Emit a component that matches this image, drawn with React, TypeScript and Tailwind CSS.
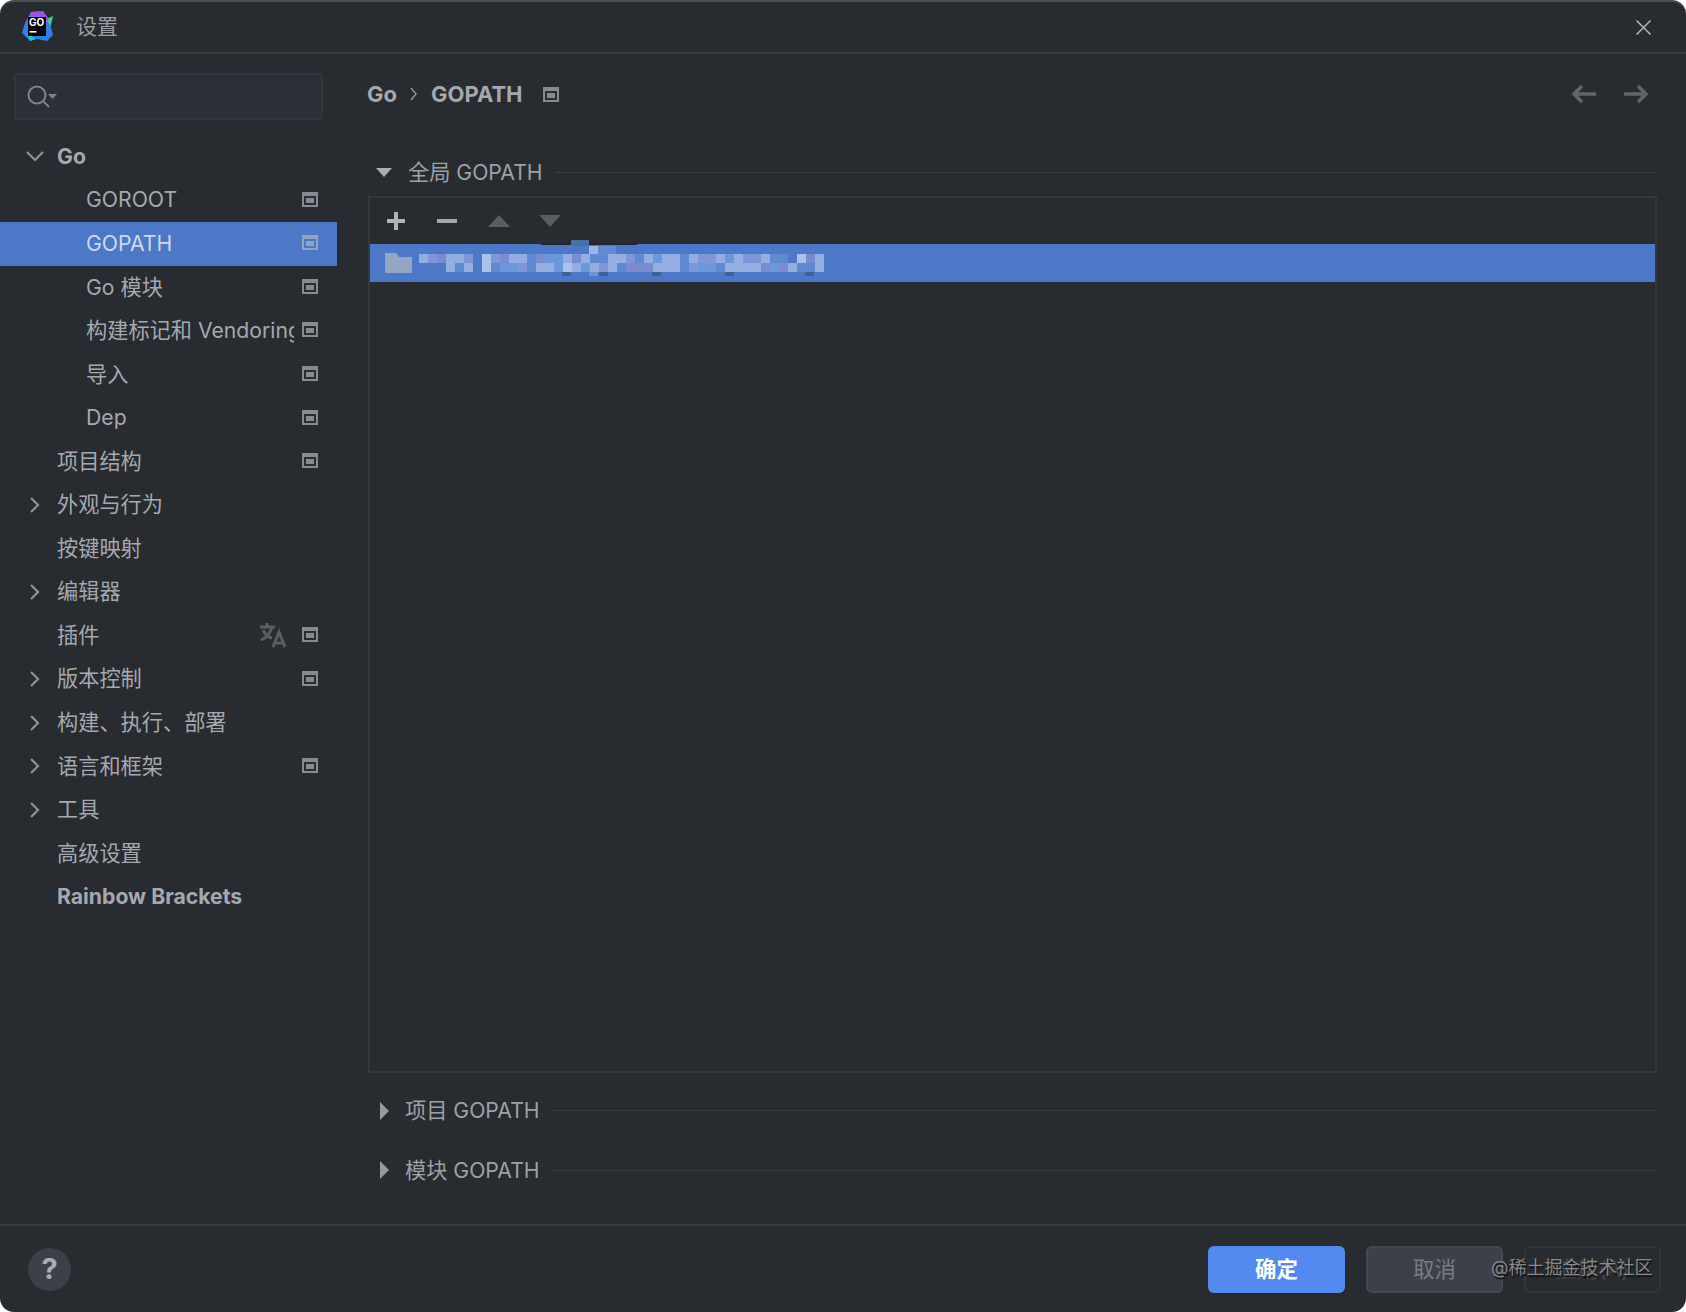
const font = "font-['Inter','Noto_Sans_CJK_SC',sans-serif]";

function PageIcon({ dim }: { dim?: boolean }) {
  return (
    <svg width="16" height="15" viewBox="0 0 16 15" className="shrink-0">
      <rect x="0" y="0" width="16" height="15" fill={dim ? "#8fa3c4" : "#868b91"} />
      <rect x="2" y="4" width="12" height="9" fill={dim ? "#4c78c7" : "#2a2d32"} />
      <rect x="4" y="6" width="8" height="5" fill={dim ? "#8fa3c4" : "#868b91"} />
    </svg>
  );
}

function Chevron({ open }: { open?: boolean }) {
  return (
    <svg width="18" height="18" viewBox="0 0 18 18" fill="none" stroke="#8e9196" strokeWidth="2.2" className="shrink-0">
      {open ? <path d="M1 4 L9 12 L17 4" /> : <path d="M5 2 L12 9 L5 16" />}
    </svg>
  );
}

function Row({
  label,
  arrow,
  open,
  indent,
  page,
  selected,
  bold,
  translate,
  clip,
}: {
  label: string;
  arrow?: boolean;
  open?: boolean;
  indent?: boolean;
  page?: boolean;
  selected?: boolean;
  bold?: boolean;
  translate?: boolean;
  clip?: boolean;
}) {
  return (
    <div className={`flex h-[43.55px] items-center pr-[19px] text-[21.2px] ${selected ? "bg-[#4c78c7] text-[#ced8e8]" : "text-[#a4a9b0]"} ${bold ? "font-bold" : ""}`}>
      <div className="flex w-[57px] shrink-0 justify-start pl-[26px]">{arrow && <Chevron open={open} />}</div>
      <div className={`min-w-0 whitespace-nowrap ${indent ? "ml-[29px]" : ""} ${clip ? "w-[208px] overflow-hidden" : ""}`}>{label}</div>
      <div className="flex-1" />
      {translate && (
        <svg width="27" height="26" viewBox="0 0 27 26" fill="none" stroke="#5a5e64" strokeWidth="3" className="mb-[2px] mr-[15px]">
          <path d="M0 5 H15 M7 1 V5 M12 5 C10 12 6 16 1 18 M3 8 C5 12 8 15 12 16" />
          <path d="M13 25 L19 10 L25 25 M15 21 H23" />
        </svg>
      )}
      {page && (
        <div className="mb-[2px] flex">
          <PageIcon dim={selected} />
        </div>
      )}
    </div>
  );
}

function Section({ label, open }: { label: string; open?: boolean }) {
  return (
    <div className="flex items-center text-[21.2px] text-[#9da1a7]">
      <svg width="18" height="18" viewBox="0 0 18 18" className={`shrink-0 ${open ? "ml-[7px]" : "ml-[8px]"}`}>
        {open ? <path d="M1 4 H17 L9 13 Z" fill="#a9acb0" /> : <path d="M4 0 L13 9 L4 18 Z" fill="#97999d" />}
      </svg>
      <span className={`whitespace-nowrap ${open ? "ml-[15px]" : "ml-[11px]"}`}>{label}</span>
      <div className={`h-px flex-1 bg-[#393c42] ${open ? "ml-[12px]" : "ml-[13px]"}`} />
    </div>
  );
}

// 打码部分的色块，按截图逐格抄的
const mosaicColors: Record<string, string> = {
  a: "#8fb0e4",
  b: "#7f97d8",
  c: "#7a8bd2",
  d: "#93aee2",
  e: "#a9c4ec",
  f: "#6b98da",
  g: "#5f8ad2",
};
const mosaicRows = [
  "dbcddb.ebcddgcffdcdggddbgdfddgdbbdfdbbdgg.ecd",
  "...dgd.egffbgddfedfdbdgcccdddgbffgddddcfcdggd",
];

function Mosaic() {
  return (
    <svg width="405" height="18" viewBox="0 0 405 18" className="ml-[7px] overflow-visible">
      <rect x="122" y="-11" width="96" height="2" fill="#20242b" />
      <rect x="152" y="-14" width="18" height="6" fill="#4a6fa8" />
      <rect x="170" y="-8" width="9" height="8" fill="#9ab5e6" />
      <rect x="179" y="-8" width="18" height="8" fill="#6289d2" />
      {mosaicRows.map((row, y) =>
        row.split("").map((ch, x) =>
          ch === "." ? null : (
            <rect key={`${x}-${y}`} x={x * 9} y={y * 9} width="9" height="9" fill={mosaicColors[ch]} />
          )
        )
      )}
      {[143, 180, 233, 306, 386].map((x) => (
        <rect key={x} x={x} y="18" width="9" height="4" fill="#3f5f95" />
      ))}
      <rect x="170" y="18" width="9" height="4" fill="#6f93d6" />
    </svg>
  );
}

export default function App() {
  return (
    <div className={`flex h-[1312px] w-[1686px] flex-col overflow-hidden rounded-[14px] border-t-2 border-[#4a4c50] bg-[#282b30] ${font}`}>
      {/* 标题栏 */}
      <div className="flex h-[52px] shrink-0 items-center border-b-2 border-[#393c41] pl-[22px] pr-[35px]">
        <svg width="32" height="32" viewBox="0 0 32 32">
          <path d="M9 1 L21 0 L25 8 L31 5 L29 16 L31 24 L25 30 L15 28 L8 30 L0 22 L3 12 Z" fill="#2f7fe6" />
          <path d="M9 1 L21 0 L27 8 L22 14 L8 8 Z" fill="#9b52e8" />
          <path d="M25 8 L31 5 L28 15 Z" fill="#38d37a" />
          <path d="M5 22 L14 28 L8 30 Z" fill="#22c7b8" />
          <rect x="6" y="6" width="18" height="19" fill="#000" />
          <rect x="7.5" y="20" width="7" height="1.6" fill="#fff" />
          <text x="7" y="15" fontSize="10" fontWeight="700" fill="#fff" fontFamily="Inter, sans-serif">GO</text>
        </svg>
        <span className="ml-[22px] text-[21px] text-[#9a9ea4]">设置</span>
        <div className="flex-1" />
        <svg width="15" height="15" viewBox="0 0 15 15" stroke="#b4b6b9" strokeWidth="1.5">
          <path d="M0.5 0.5 L14.5 14.5 M14.5 0.5 L0.5 14.5" />
        </svg>
      </div>

      <div className="flex min-h-0 flex-1">
        {/* 左侧设置树 */}
        <div className="w-[337px] shrink-0 pt-[19px]">
          <div className="ml-[14px] flex h-[47px] w-[309px] items-center rounded-[4px] border-2 border-[#33363d] bg-[#2c2f37] pl-[11px]">
            <svg width="30" height="24" viewBox="0 0 30 24" fill="none" stroke="#7f8388" strokeWidth="2">
              <circle cx="10" cy="10" r="8.5" />
              <path d="M16 16 L22 22" />
              <path d="M21 9 H30 L25.5 14 Z" fill="#7f8388" stroke="none" />
            </svg>
          </div>
          <div className="mt-[15px]">
            <Row label="Go" arrow open bold />
            <Row label="GOROOT" indent page />
            <Row label="GOPATH" indent page selected />
            <Row label="Go 模块" indent page />
            <Row label="构建标记和 Vendoring" indent page clip />
            <Row label="导入" indent page />
            <Row label="Dep" indent page />
            <Row label="项目结构" page />
            <Row label="外观与行为" arrow />
            <Row label="按键映射" />
            <Row label="编辑器" arrow />
            <Row label="插件" page translate />
            <Row label="版本控制" arrow page />
            <Row label="构建、执行、部署" arrow />
            <Row label="语言和框架" arrow page />
            <Row label="工具" arrow />
            <Row label="高级设置" />
            <Row label="Rainbow Brackets" bold />
          </div>
        </div>

        {/* 右侧内容 */}
        <div className="flex min-w-0 flex-1 flex-col pl-[31px] pr-[29px]">
          <div className="mt-[19px] flex h-[42px] shrink-0 items-center">
            <span className="ml-[-1px] text-[22px] font-bold text-[#a4a9b0]">Go</span>
            <svg width="8" height="14" viewBox="0 0 8 14" fill="none" stroke="#94979c" strokeWidth="1.4" className="ml-[13px]">
              <path d="M1 1 L6 7 L1 13" />
            </svg>
            <span className="ml-[13px] text-[22px] font-bold text-[#a4a9b0]">GOPATH</span>
            <div className="ml-[20px] flex">
              <PageIcon />
            </div>
            <div className="flex-1" />
            <svg width="26" height="20" viewBox="0 0 26 20" fill="none" stroke="#626569" strokeWidth="3.5">
              <path d="M25 10 H3 M11 2 L3 10 L11 18" />
            </svg>
            <svg width="26" height="20" viewBox="0 0 26 20" fill="none" stroke="#626569" strokeWidth="3.5" className="ml-[27px] mr-[7px]">
              <path d="M0 10 H22 M14 2 L22 10 L14 18" />
            </svg>
          </div>

          <div className="mt-[42px] shrink-0">
            <Section label="全局 GOPATH" open />
          </div>

          <div className="mt-[7px] flex h-[877px] shrink-0 flex-col border-2 border-[#34373c]">
            <div className="flex h-[46px] shrink-0 items-center pl-[16px]">
              <svg width="20" height="20" viewBox="0 0 20 20" stroke="#b0b2b5" strokeWidth="4"><path d="M10 1 V19 M1 10 H19" /></svg>
              <svg width="20" height="20" viewBox="0 0 20 20" stroke="#a4a6a9" strokeWidth="4" className="ml-[31px]"><path d="M0 10 H20" /></svg>
              <svg width="22" height="12" viewBox="0 0 22 12" className="ml-[31px]"><path d="M0 12 L11 0 L22 12 Z" fill="#5b5d60" /></svg>
              <svg width="22" height="12" viewBox="0 0 22 12" className="ml-[29px]"><path d="M0 0 L22 0 L11 12 Z" fill="#5b5d60" /></svg>
            </div>
            <div className="flex h-[38px] shrink-0 items-center bg-[#4c78c7] pl-[15px]">
              <svg width="27" height="20" viewBox="0 0 27 20"><path d="M0 0 H11 L14 4 H27 V20 H0 Z" fill="#93a6c2" /></svg>
              <Mosaic />
            </div>
          </div>

          <div className="mt-[22px] shrink-0">
            <Section label="项目 GOPATH" />
          </div>
          <div className="mt-[28px] shrink-0">
            <Section label="模块 GOPATH" />
          </div>
        </div>
      </div>

      {/* 底部按钮 */}
      <div className="relative flex h-[88px] shrink-0 items-center border-t-2 border-[#393c41] pl-[28px] pr-[25px]">
        <div className="flex h-[43px] w-[43px] items-center justify-center rounded-full bg-[#3d4048] text-[29px] font-bold text-[#aaadb2]">?</div>
        <div className="flex-1" />
        <button className="h-[47px] w-[137px] rounded-[6px] bg-[#548af0] text-[21.4px] font-bold text-white">确定</button>
        <button className="ml-[21px] h-[47px] w-[137px] rounded-[6px] border-2 border-[#454950] bg-[#3d4048] text-[21.4px] text-[#787c82]">取消</button>
        <button className="ml-[21px] h-[47px] w-[137px] rounded-[6px] border-2 border-[#32353a] text-[21.4px] text-[#45484d]">应用(A)</button>
        {/* 水印 */}
        <span className="absolute left-[1491px] top-[28px] whitespace-nowrap text-[18px] text-[#85878b] [text-shadow:1px_2px_1px_#111]">@稀土掘金技术社区</span>
      </div>
    </div>
  );
}
